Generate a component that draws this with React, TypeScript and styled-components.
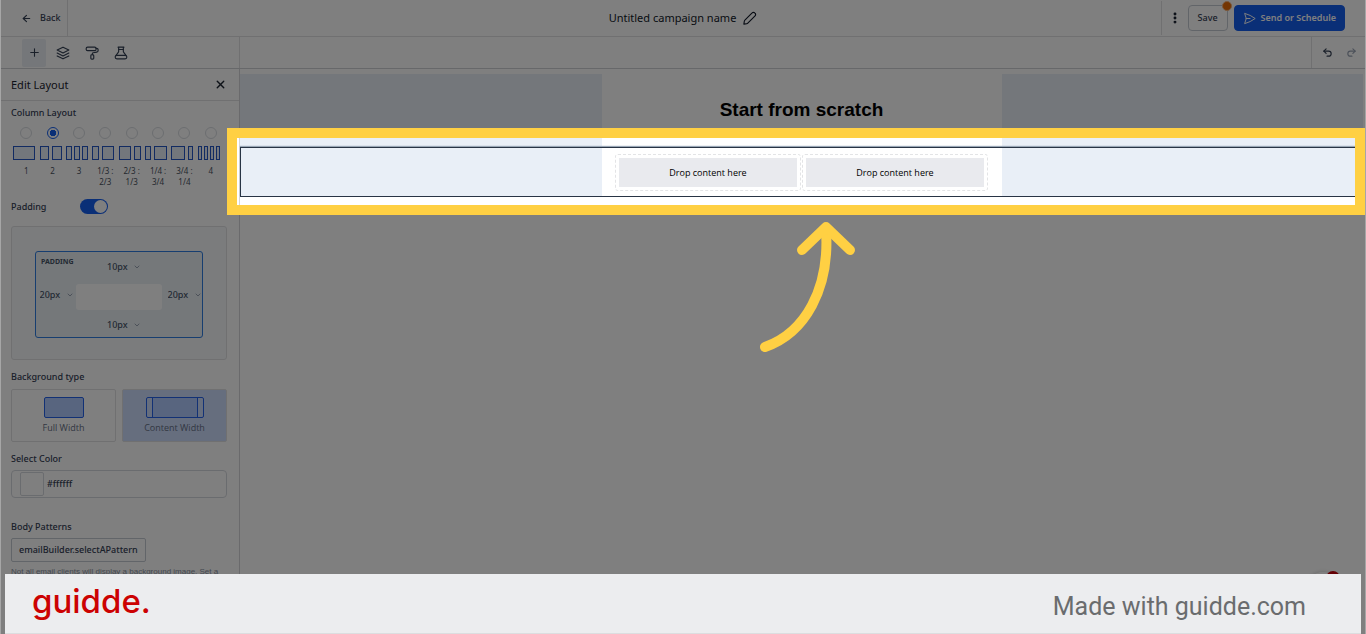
import React from "react";
import styled, { createGlobalStyle } from "styled-components";
import { ArrowLeft, ChevronDown, EllipsisVertical, Plus, Redo2, Undo2, X } from "lucide-react";

const GlobalStyle = createGlobalStyle`
  *, *::before, *::after { box-sizing: border-box; }
  body { margin: 0; background: #808080; font-family: "Noto Sans", "Open Sans", sans-serif; }
  button, input, select { font: inherit; color: inherit; margin: 0; padding: 0; }
  button { background: none; border: 0; cursor: pointer; }
  h1, h2, p, fieldset, legend { margin: 0; padding: 0; border: 0; }
`;

const line = "#e0e1e3";
const blue = "#155eef";
const narrow = `"Open Sans", "Noto Sans", sans-serif`;

const Page = styled.div`
  position: relative;
  display: flex;
  flex-direction: column;
  height: 100vh;
  overflow: hidden;
  background: #fff;
  border: solid #a6a6a6;
  border-width: 0 1px;
  color: #344054;
  font-size: 9px;
  line-height: 12px;
`;

const Header = styled.header`
  display: grid;
  grid-template-columns: 1fr auto 1fr;
  align-items: center;
  flex: none;
  height: 37px;
  border-bottom: 1px solid ${line};
`;

const BackLink = styled.a`
  display: flex;
  align-items: center;
  justify-self: start;
  gap: 8px;
  width: 67px;
  height: 36px;
  padding-left: 20px;
  border-right: 1px solid ${line};
  color: #344054;
  font-weight: 500;
  text-decoration: none;
`;

const Title = styled.h1`
  display: flex;
  align-items: center;
  gap: 6px;
  color: #101828;
  font-size: 11px;
  font-weight: 400;
  line-height: 18px;
`;

const IconButton = styled.button<{ $active?: boolean; $faint?: boolean }>`
  display: grid;
  place-items: center;
  width: 24px;
  height: 28px;
  border-radius: 2px;
  color: ${(p) => (p.$faint ? "#98a2b3" : "#344054")};
  background: ${(p) => (p.$active ? "#eaeef4" : "transparent")};
`;

const PlainButton = styled.button`
  display: grid;
  place-items: center;
`;

const Actions = styled.div`
  display: flex;
  align-items: center;
  justify-self: end;
  gap: 6px;
  height: 34px;
  padding: 0 20px 0 6px;
  border-left: 1px solid ${line};
`;

const ActionButton = styled.button<{ $primary?: boolean }>`
  position: relative;
  display: flex;
  align-items: center;
  gap: 5px;
  height: 26px;
  padding: 0 ${(p) => (p.$primary ? 8 : 9)}px;
  border: 1px solid ${(p) => (p.$primary ? blue : "#c5cad3")};
  border-radius: 4px;
  background: ${(p) => (p.$primary ? blue : "#fff")};
  color: ${(p) => (p.$primary ? "#fff" : "#344054")};
  font-weight: ${(p) => (p.$primary ? 600 : 500)};
`;

const Dot = styled.span`
  position: absolute;
  top: -5px;
  right: -5px;
  width: 10px;
  height: 10px;
  border: 1px solid #f5b27a;
  border-radius: 50%;
  background: #e86a04;
`;

const Toolbar = styled.div`
  display: flex;
  flex: none;
  justify-content: space-between;
  height: 32px;
  border-bottom: 1px solid #cfd1d4;
`;

const Tools = styled.nav`
  display: flex;
  align-items: center;
  gap: 5px;
  width: 239px;
  padding-left: 21px;
  border-right: 1px solid ${line};
`;

const History = styled.div`
  display: flex;
  align-items: center;
  width: 54px;
  padding-left: 3px;
  border-left: 1px solid ${line};
`;

const Body = styled.div`
  display: flex;
  flex: 1;
  min-height: 0;
`;

const Sidebar = styled.aside`
  flex: none;
  width: 239px;
  overflow: hidden;
  border-right: 1px solid #d4d5d8;
`;

const PanelHeader = styled.div`
  display: flex;
  align-items: center;
  justify-content: space-between;
  height: 32px;
  padding: 0 12px 0 10px;
  border-bottom: 1px solid ${line};
  color: #1d2430;
`;

const PanelTitle = styled.h2`
  font-size: 11px;
  font-weight: 400;
  line-height: 16px;
`;

const Panel = styled.div`
  padding: 6px 12px 0 10px;
`;

const Label = styled.label`
  display: block;
  font-weight: 500;
`;

const Legend = styled.legend`
  font-weight: 500;
`;

const LayoutGrid = styled.div`
  display: grid;
  grid-template-columns: repeat(8, 1fr);
  margin: 8px 3px 0 2px;
`;

const LayoutOption = styled.label`
  display: flex;
  flex-direction: column;
  align-items: center;
  line-height: 11px;
  font-size: 8px;
  text-align: center;
  color: #4a5260;
`;

const Radio = styled.input`
  appearance: none;
  width: 12px;
  height: 12px;
  margin-bottom: 7px;
  border: 1px solid #d8dbe0;
  border-radius: 50%;
  &:checked {
    border-color: ${blue};
    background: radial-gradient(circle, ${blue} 0 3px, transparent 3px);
  }
`;

const Columns = styled.span<{ $gap: number }>`
  display: flex;
  gap: ${(p) => p.$gap}px;
  width: 22px;
  height: 14px;
  margin: 0 4px 5px 0;
`;

const Column = styled.span<{ $share: number }>`
  flex: ${(p) => p.$share} 1 0;
  border: 1px solid #2457c5;
  background: #e6eef8;
`;

const Caption = styled.span`
  width: 22px;
  height: 22px;
`;

const SwitchRow = styled.label`
  display: flex;
  align-items: center;
  gap: 34px;
  margin-top: 12px;
  font-weight: 500;
`;

const Switch = styled.input`
  appearance: none;
  position: relative;
  width: 28px;
  height: 15px;
  border-radius: 8px;
  background: ${blue};
  &::after {
    content: "";
    position: absolute;
    top: 1px;
    right: 1px;
    width: 13px;
    height: 13px;
    border-radius: 50%;
    background: #fff;
  }
`;

const SpacingBox = styled.div`
  margin-top: 12px;
  padding: 24px 23px 21px;
  border: 1px solid ${line};
  border-radius: 3px;
  background: #f7f9fb;
`;

const PaddingBox = styled.div`
  position: relative;
  display: grid;
  grid-template-columns: 1fr 86px 1fr;
  grid-template-rows: 32px 26px 1fr;
  grid-template-areas: ". top ." "left inner right" ". bottom .";
  place-items: center;
  height: 87px;
  border: 1px solid #2f7de1;
  border-radius: 3px;
  background: #eaf0f5;
`;

const PaddingTag = styled.span`
  position: absolute;
  top: 4px;
  left: 5px;
  font-size: 7px;
  font-weight: 700;
  color: #475467;
`;

const InnerBox = styled.div`
  grid-area: inner;
  width: 100%;
  height: 100%;
  border-radius: 3px;
  background: #fff;
`;

const pickerPadding: Record<string, string> = {
  top: "0 0 2px 10px",
  bottom: "2px 0 0 10px",
  left: "0 0 4px 1px",
  right: "0 0 4px 5px",
};

const PickerWrap = styled.span<{ $side: string }>`
  grid-area: ${(p) => p.$side};
  display: flex;
  align-items: center;
  gap: 4px;
  padding: ${(p) => pickerPadding[p.$side]};
  color: #98a2b3;
`;

const Select = styled.select`
  appearance: none;
  width: 22px;
  border: 0;
  background: none;
  color: #475467;
  font-weight: 500;
`;

const Group = styled.fieldset<{ $top: number }>`
  min-width: 0;
  margin-top: ${(p) => p.$top}px;
`;

const Cards = styled.div`
  display: grid;
  grid-template-columns: 1fr 1fr;
  gap: 6px;
  margin-top: 6px;
`;

const Card = styled.button<{ $selected?: boolean }>`
  display: flex;
  flex-direction: column;
  align-items: center;
  gap: 4px;
  height: 53px;
  padding-top: 7px;
  border: 1px solid ${line};
  border-radius: 2px;
  background: ${(p) => (p.$selected ? "#ccdcfd" : "#fff")};
  color: #667085;
  font-family: ${narrow};
`;

const WidthSample = styled.span<{ $inset?: boolean }>`
  display: block;
  width: ${(p) => (p.$inset ? 58 : 40)}px;
  height: 21px;
  padding: 0 5px;
  border: 1px solid #2563eb;
  border-radius: 2px;
  background: ${(p) => (p.$inset ? "transparent" : "#b0cbff")};
`;

const WidthCore = styled.span`
  display: block;
  height: 100%;
  border: solid #2563eb;
  border-width: 0 1px;
  background: #b0cbff;
`;

const ColorField = styled.div`
  display: flex;
  align-items: center;
  gap: 3px;
  height: 28px;
  margin-top: 5px;
  padding-left: 8px;
  border: 1px solid #d5d8de;
  border-radius: 4px;
`;

const Swatch = styled.button`
  flex: none;
  width: 24px;
  height: 24px;
  border: 1px solid #d5d8de;
  border-radius: 2px;
`;

const ColorInput = styled.input`
  flex: 1;
  min-width: 0;
  border: 0;
  outline: 0;
  background: none;
  font-weight: 500;
`;

const PatternButton = styled.button`
  height: 24px;
  margin-top: 5px;
  padding: 0 7px;
  border: 1px solid #c5cad3;
  border-radius: 2px;
  font-weight: 500;
`;

const Hint = styled.p`
  margin-top: 4px;
  color: #8891a0;
  font-family: "Liberation Sans", Arial, sans-serif;
  font-size: 8px;
  line-height: 11px;
  white-space: nowrap;
`;

const Canvas = styled.main`
  display: flex;
  flex: 1;
  flex-direction: column;
  min-width: 0;
  padding: 5px 2px 0 0;
`;

const Band = styled.section`
  display: flex;
  justify-content: center;
  background: #e9eff7;
`;

const SelectedBand = styled(Band)`
  height: 50px;
  margin-right: -2px;
  padding-right: 2px;
  border: solid #283445;
  border-width: 1px 0 1px 1px;
  box-shadow: 0 -1px 1px #98a6b5;
`;

const Sheet = styled.div`
  width: 400px;
  background: #fff;
`;

const Heading = styled.h2`
  padding: 24px 0 26px;
  color: #000;
  font: 700 19px/23px "Liberation Sans", Arial, sans-serif;
  text-align: center;
`;

const DropRow = styled.div`
  display: grid;
  grid-template-columns: 1fr 1fr;
  gap: 1px;
  padding: 6px 14px 5px 13px;
`;

const DropCell = styled.div`
  height: 37px;
  padding: 3px;
  border: 1px dashed #e3e4e6;
  border-radius: 3px;
`;

const DropZone = styled.div`
  display: grid;
  place-items: center;
  height: 100%;
  background: #e9eaee;
  color: #000;
  font-family: ${narrow};
`;

const HelpButton = styled.button`
  position: absolute;
  right: 25px;
  bottom: 28px;
  width: 34px;
  height: 34px;
  border-radius: 50%;
  background: #fff;
  box-shadow: 0 0 4px #d0d0d0;
`;

const HelpBadge = styled.span`
  position: absolute;
  top: -1px;
  right: 0;
  width: 14px;
  height: 14px;
  border-radius: 50%;
  background: #c8000b;
`;

const Spotlight = styled.div`
  position: absolute;
  top: 128px;
  left: 226px;
  right: 0;
  height: 87px;
  border: 10px solid #ffd043;
  box-shadow: 0 0 0 3000px rgba(0, 0, 0, 0.5);
  pointer-events: none;
`;

const Pointer = styled.svg`
  position: absolute;
  top: 84px;
  left: 50%;
  margin-left: -40px;
`;

const Banner = styled.footer`
  position: absolute;
  left: 4px;
  right: 4px;
  bottom: 0;
  display: flex;
  align-items: center;
  justify-content: space-between;
  height: 60px;
  padding: 0 55px 0 27px;
  border-bottom: 1px solid #dcdddf;
  background: #ecedef;
`;

const Brand = styled.a`
  padding-bottom: 6px;
  color: #cc0202;
  font: 500 33px/40px Inter, sans-serif;
  text-decoration: none;
`;

const Credit = styled.p`
  padding-top: 6px;
  color: #6a6c6e;
  font: 400 25px/32px Roboto, sans-serif;
`;

type IconProps = { size: number; stroke?: number; children: React.ReactNode };

const Icon = ({ size, stroke = 2, children }: IconProps) => (
  <svg
    width={size}
    height={size}
    viewBox="0 0 24 24"
    fill="none"
    stroke="currentColor"
    strokeWidth={stroke}
    strokeLinecap="round"
    strokeLinejoin="round"
    aria-hidden="true"
  >
    {children}
  </svg>
);

const layouts: { name: string; shares: number[] }[] = [
  { name: "1", shares: [1] },
  { name: "2", shares: [1, 1] },
  { name: "3", shares: [1, 1, 1] },
  { name: "1/3 : 2/3", shares: [1, 2] },
  { name: "2/3 : 1/3", shares: [2, 1] },
  { name: "1/4 : 3/4", shares: [1, 3] },
  { name: "3/4 : 1/4", shares: [3, 1] },
  { name: "4", shares: [1, 1, 1, 1] },
];

const PaddingPicker = ({ side, value }: { side: string; value: string }) => (
  <PickerWrap $side={side}>
    <Select aria-label={`Padding ${side}`} defaultValue={value}>
      <option>{value}</option>
    </Select>
    <ChevronDown size={8} strokeWidth={3} />
  </PickerWrap>
);

export default function App() {
  return (
    <Page>
      <GlobalStyle />
      <Header>
        <BackLink href="#back">
          <ArrowLeft size={11} strokeWidth={2.5} />
          Back
        </BackLink>
        <Title>
          Untitled campaign name
          <PlainButton aria-label="Rename campaign">
            <Icon size={15} stroke={1.8}>
              <path d="M3 21l.7-4.600a3 3 0 0 1 .9-1.700L16.200 3.100a2.900 2.900 0 0 1 4.200 0l.5.5a2.900 2.900 0 0 1 0 4.200L9.300 19.400a3 3 0 0 1-1.700.9L3 21z" />
            </Icon>
          </PlainButton>
        </Title>
        <Actions>
          <PlainButton aria-label="More">
            <EllipsisVertical size={14} strokeWidth={3} color="#101828" />
          </PlainButton>
          <ActionButton>
            Save
            <Dot />
          </ActionButton>
          <ActionButton $primary>
            <Icon size={13} stroke={1.8}>
              <path d="M6 12 3 2.500A60 60 0 0 1 22.500 12 60 60 0 0 1 3 21.500L6 12Zm0 0h7" />
            </Icon>
            Send or Schedule
          </ActionButton>
        </Actions>
      </Header>

      <Toolbar>
        <Tools aria-label="Builder tools">
          <IconButton $active aria-label="Add">
            <Plus size={13} />
          </IconButton>
          <IconButton aria-label="Layers">
            <Icon size={14}>
              <path d="M12 2 2 7l10 5 10-5-10-5Z" />
              <path d="m2 12 10 5 10-5" />
              <path d="m2 17 10 5 10-5" />
            </Icon>
          </IconButton>
          <IconButton aria-label="Styles">
            <Icon size={14}>
              <rect x="2" y="2" width="17" height="6" rx="2.500" />
              <path d="M19 4h1a2.500 2.500 0 0 1 2.500 2.500v1A3 3 0 0 1 20 10.500l-6 1a2 2 0 0 0-1.500 2V15" />
              <rect x="10" y="15" width="5" height="7.500" rx="1.500" />
            </Icon>
          </IconButton>
          <IconButton aria-label="Test">
            <Icon size={14}>
              <path d="M7 2h10M8 2v7a4 4 0 0 1-1 2.500L3.500 16M16 2v7a4 4 0 0 0 1 2.500l3.500 4.500" />
              <rect x="2" y="16" width="20" height="6" rx="3" />
              <path d="M8 6h8" />
            </Icon>
          </IconButton>
        </Tools>
        <History>
          <IconButton aria-label="Undo">
            <Undo2 size={11} strokeWidth={2.5} />
          </IconButton>
          <IconButton $faint aria-label="Redo">
            <Redo2 size={11} strokeWidth={2.5} />
          </IconButton>
        </History>
      </Toolbar>

      <Body>
        <Sidebar>
          <PanelHeader>
            <PanelTitle>Edit Layout</PanelTitle>
            <PlainButton aria-label="Close">
              <X size={13} strokeWidth={2.5} />
            </PlainButton>
          </PanelHeader>
          <Panel>
            <Group $top={0}>
              <Legend>Column Layout</Legend>
              <LayoutGrid>
                {layouts.map((layout) => (
                  <LayoutOption key={layout.name}>
                    <Radio type="radio" name="layout" defaultChecked={layout.name === "2"} />
                    <Columns $gap={layout.shares.length === 2 ? 3 : 2}>
                      {layout.shares.map((share, i) => (
                        <Column key={i} $share={share} />
                      ))}
                    </Columns>
                    <Caption>{layout.name}</Caption>
                  </LayoutOption>
                ))}
              </LayoutGrid>
            </Group>

            <SwitchRow>
              Padding
              <Switch type="checkbox" role="switch" defaultChecked />
            </SwitchRow>

            <SpacingBox>
              <PaddingBox>
                <PaddingTag>PADDING</PaddingTag>
                <PaddingPicker side="top" value="10px" />
                <PaddingPicker side="left" value="20px" />
                <InnerBox />
                <PaddingPicker side="right" value="20px" />
                <PaddingPicker side="bottom" value="10px" />
              </PaddingBox>
            </SpacingBox>

            <Group $top={11}>
              <Legend>Background type</Legend>
              <Cards>
                <Card>
                  <WidthSample />
                  Full Width
                </Card>
                <Card $selected>
                  <WidthSample $inset>
                    <WidthCore />
                  </WidthSample>
                  Content Width
                </Card>
              </Cards>
            </Group>

            <Group $top={11}>
              <Label htmlFor="color">Select Color</Label>
              <ColorField>
                <Swatch aria-label="Pick a color" />
                <ColorInput id="color" defaultValue="#ffffff" />
              </ColorField>
            </Group>

            <Group $top={23}>
              <Legend>Body Patterns</Legend>
              <PatternButton>emailBuilder.selectAPattern</PatternButton>
              <Hint>Not all email clients will display a background image. Set a</Hint>
            </Group>
          </Panel>
        </Sidebar>

        <Canvas>
          <Band>
            <Sheet>
              <Heading>Start from scratch</Heading>
            </Sheet>
          </Band>
          <SelectedBand>
            <Sheet>
              <DropRow>
                <DropCell>
                  <DropZone>Drop content here</DropZone>
                </DropCell>
                <DropCell>
                  <DropZone>Drop content here</DropZone>
                </DropCell>
              </DropRow>
            </Sheet>
          </SelectedBand>
        </Canvas>
      </Body>

      <HelpButton aria-label="Help">
        <HelpBadge />
      </HelpButton>

      <Spotlight>
        <Pointer
          width="100"
          height="140"
          viewBox="0 0 100 140"
          fill="none"
          stroke="#ffd043"
          strokeWidth="10"
          strokeLinecap="round"
          strokeLinejoin="round"
        >
          <path d="M9 125C49 111 74 67 70 8" />
          <path d="M46 28 70 5l24 23" />
        </Pointer>
      </Spotlight>

      <Banner>
        <Brand href="#guidde">guidde.</Brand>
        <Credit>Made with guidde.com</Credit>
      </Banner>
    </Page>
  );
}
